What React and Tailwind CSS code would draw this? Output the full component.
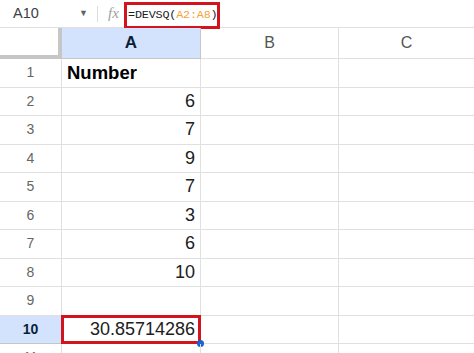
export default function App() {
    const rows = [
        { n: 1, v: 'Number', head: true },
        { n: 2, v: '6' },
        { n: 3, v: '7' },
        { n: 4, v: '9' },
        { n: 5, v: '7' },
        { n: 6, v: '3' },
        { n: 7, v: '6' },
        { n: 8, v: '10' },
        { n: 9, v: '' },
        { n: 10, v: '30.85714286', selected: true },
        { n: 11, v: '' },
    ];

    return (
        <div className="w-[474px] h-[353px] overflow-hidden bg-white font-['Liberation_Sans',Arial,sans-serif]">
            {/* Formula bar */}
            <div className="flex h-[27px] items-center">
                <div className="flex w-[97px] items-center pl-[13px] text-[14.5px] text-[#3c4043]">
                    <span className="w-[66px]">A10</span>
                    <span className="text-[9px] text-[#5f6368]">▼</span>
                </div>
                <div className="h-[16px] w-px bg-[#dadce0]"></div>
                <span className="ml-[10px] w-[16px] font-['Liberation_Serif',serif] text-[15px] italic text-[#a0a0a0]">fx</span>
                <div className="mt-[4px] flex h-[27px] w-[96px] items-center border-[3px] border-[#d2141f] pl-[1px] font-['Liberation_Mono',monospace] text-[11.8px] tracking-[-0.2px] text-[#202124]">
                    =DEVSQ(<span className="text-[#f3a53a]">A2:A8</span>)
                </div>
            </div>

            {/* Column headers */}
            <div className="flex h-[32px] border-t border-[#e0e0e0]">
                <div className="w-[62px] border-r-[4px] border-b-[4px] border-[#c6c6c6] bg-white"></div>
                <div className="flex w-[139px] items-center justify-center border-r border-b border-[#c4c7c5] bg-[#d3e3fd] text-[17px] font-bold text-[#0b1f3a]">A</div>
                <div className="flex w-[138px] items-center justify-center border-r border-b border-[#e0e0e0] text-[16px] text-[#555]">B</div>
                <div className="flex flex-1 items-center justify-center border-b border-[#e0e0e0] text-[16px] text-[#555]">C</div>
            </div>

            {/* Rows */}
            {rows.map((r) => (
                <div key={r.n} className="flex h-[28.5px]">
                    <div
                        className={
                            r.selected
                                ? 'flex w-[62px] items-center justify-center border-r border-b border-[#c4c7c5] bg-[#d3e3fd] text-[14px] font-bold text-[#0b1f3a]'
                                : 'flex w-[62px] items-center justify-center border-r border-b border-[#e0e0e0] text-[14px] text-[#666]'
                        }
                    >
                        {r.n}
                    </div>
                    <div
                        className={
                            r.head
                                ? 'relative flex w-[139px] items-center border-r border-b border-[#e0e0e0] pl-[5px] text-[18.5px] font-bold text-black'
                                : 'relative flex w-[139px] items-center justify-end border-r border-b border-[#e0e0e0] pr-[5px] text-[18px] text-[#202020]'
                        }
                    >
                        {r.v}
                        {r.selected && (
                            <>
                                <div className="absolute -top-px -left-px -right-px -bottom-px border-[3px] border-[#d2141f]"></div>
                                <div className="absolute -bottom-[4px] -right-[4px] h-[7px] w-[7px] rounded-full bg-[#1a62d6]"></div>
                            </>
                        )}
                    </div>
                    <div className="w-[138px] border-r border-b border-[#e0e0e0]"></div>
                    <div className="flex-1 border-b border-[#e0e0e0]"></div>
                </div>
            ))}
        </div>
    );
}
